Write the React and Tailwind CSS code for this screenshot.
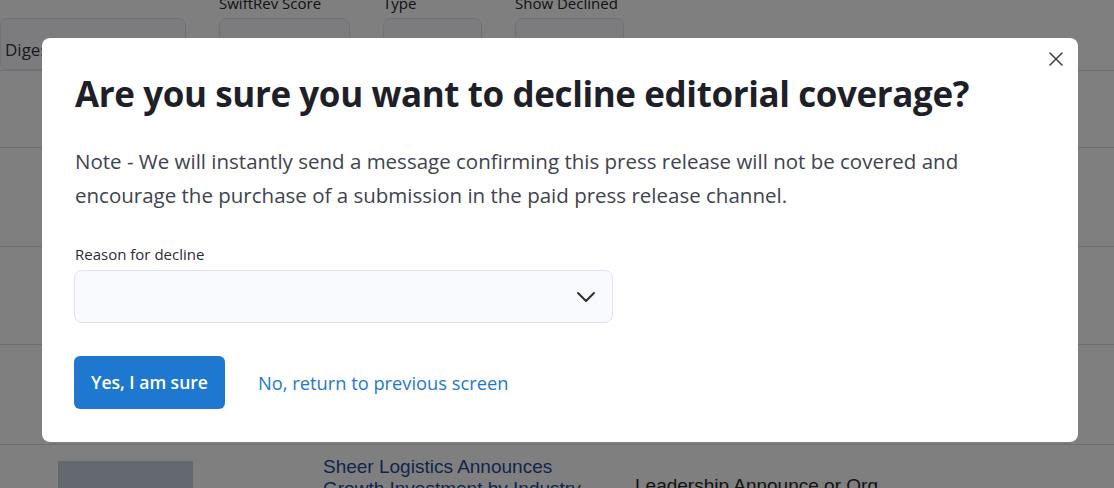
import React from "react";

function Chevron() {
  return (
    <svg width="20" height="12" viewBox="0 0 20 12" fill="none" stroke="#2b2d36" strokeWidth="2" strokeLinecap="round" strokeLinejoin="round">
      <path d="M2 2 L10 10 L18 2" />
    </svg>
  );
}

function CloseIcon() {
  return (
    <svg width="14" height="14" viewBox="0 0 14 14" fill="none" stroke="#3a3c48" strokeWidth="1.5" strokeLinecap="round">
      <path d="M1 1 L13 13 M13 1 L1 13" />
    </svg>
  );
}

function Background() {
  return (
    <div className="w-full bg-white flex flex-col" style={{ fontFamily: '"Open Sans", "Noto Sans", sans-serif' }}>
      <div className="shrink-0 h-[71px] border-b border-[#dcdcee] flex items-start overflow-hidden">
        <div className="flex gap-[33px] -mt-[6px]">
          <div className="flex flex-col">
            <div className="h-[24px]" />
            <div className="w-[186px] h-[52px] border border-[#e0e3ef] rounded-[8px] bg-[#f8f9fc] flex items-center pl-[4px] text-[17px] text-[#30343c]">
              <span className="mt-[12px]">Digest</span>
            </div>
          </div>
          <div className="flex flex-col">
            <div className="h-[24px] text-[15px] text-[#22242c] leading-[18px]">SwiftRev Score</div>
            <div className="w-[131px] h-[52px] border border-[#e0e3ef] rounded-[8px] bg-[#f8f9fc]" />
          </div>
          <div className="flex flex-col">
            <div className="h-[24px] text-[15px] text-[#22242c] leading-[18px]">Type</div>
            <div className="w-[99px] h-[52px] border border-[#e0e3ef] rounded-[8px] bg-[#f8f9fc]" />
          </div>
          <div className="flex flex-col">
            <div className="h-[24px] text-[15px] text-[#22242c] leading-[18px]">Show Declined</div>
            <div className="w-[109px] h-[52px] border border-[#e0e3ef] rounded-[8px] bg-[#f8f9fc]" />
          </div>
        </div>
      </div>
      <div className="shrink-0 h-[77px] border-b border-[#dcdcee]" />
      <div className="shrink-0 h-[99px] border-b border-[#dcdcee]" />
      <div className="shrink-0 h-[98px] border-b border-[#dcdcee]" />
      <div className="shrink-0 h-[100px] border-b border-[#dcdcee]" />
      <div className="shrink-0 flex pt-[11px]">
        <div className="ml-[58px] w-[135px] h-[60px] bg-[#c8d2de] mt-[5px]" />
        <div className="ml-[130px] w-[290px] text-[19px] leading-[22px] text-[#1f4c9a]" style={{ fontFamily: '"Liberation Sans", Arial, sans-serif' }}>
          Sheer Logistics Announces Growth Investment by Industry
        </div>
        <div className="ml-[22px] mt-[16px] text-[19px] text-[#2a2a2a]" style={{ fontFamily: '"Liberation Sans", Arial, sans-serif' }}>
          Leadership Announce or Org
        </div>
      </div>
    </div>
  );
}

export default function App() {
  return (
    <div className="relative w-[1114px] h-[488px] overflow-hidden">
      <Background />
      <div className="absolute inset-0 bg-black/50 pt-[38px] pl-[42px]">
        <div
          className="relative w-[1036px] h-[404px] bg-white rounded-[8px] pl-[32px] pt-[34px] flex flex-col"
          style={{ fontFamily: '"Open Sans", "Noto Sans", sans-serif' }}
        >
          <button className="absolute right-[15px] top-[14px] w-[14px] h-[14px] flex items-center justify-center">
            <CloseIcon />
          </button>
          <h2 className="pl-[1px] text-[35px] font-bold leading-[44px] text-[#1e1f28] tracking-[-0.4px]">
            Are you sure you want to decline editorial coverage?
          </h2>
          <p className="pl-[1px] mt-[28px] text-[20.5px] leading-[34px] text-[#40434e] w-[920px]">
            Note - We will instantly send a message confirming this press release will not be covered and encourage the purchase of a submission in the paid press release channel.
          </p>
          <label className="pl-[1px] mt-[32px] text-[15px] leading-[20px] text-[#2a2c34]">Reason for decline</label>
          <div className="mt-[6px] w-[539px] h-[53px] border border-[#e1e4f0] rounded-[8px] bg-[#f9fafd] flex items-center justify-end pr-[16px]">
            <Chevron />
          </div>
          <div className="mt-[33px] flex items-center">
            <button className="h-[53px] w-[151px] rounded-[6px] bg-[#1e78d0] text-white text-[17.5px] font-semibold">
              Yes, I am sure
            </button>
            <button className="ml-[33px] text-[18.3px] font-medium text-[#1e78d0]">
              No, return to previous screen
            </button>
          </div>
        </div>
      </div>
    </div>
  );
}
